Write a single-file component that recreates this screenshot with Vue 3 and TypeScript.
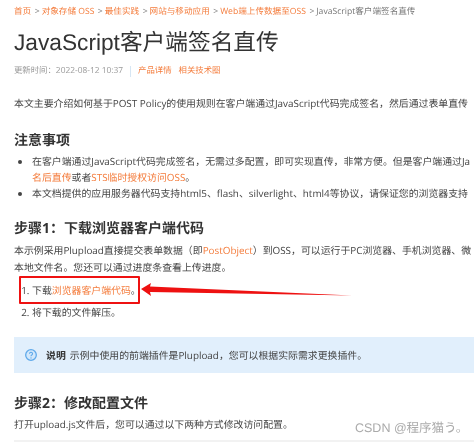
<script setup lang="ts">
const crumbs: string[] = ['首页', '对象存储 OSS', '最佳实践', '网站与移动应用', 'Web端上传数据至OSS']
</script>

<template>
  <main class="page">
    <nav class="crumbs">
      <template v-for="(c, i) in crumbs" :key="c">
        <span v-if="i > 0" class="sep">&gt;</span>
        <a class="link">{{ c }}</a>
      </template>
      <span class="sep">&gt;</span>
      <span class="current">JavaScript客户端签名直传</span>
    </nav>
    <h1 class="title">JavaScript客户端签名直传</h1>
    <div class="meta">
      <span>更新时间：2022-08-12 10:37</span>
      <i class="divider"></i>
      <a class="link">产品详情</a>
      <a class="link">相关技术圈</a>
    </div>
    <p class="intro">本文主要介绍如何基于POST Policy的使用规则在客户端通过JavaScript代码完成签名，然后通过表单直传</p>

    <h2 class="h-first">注意事项</h2>
    <ul class="bullets">
      <li>
        在客户端通过JavaScript代码完成签名，无需过多配置，即可实现直传，非常方便。但是客户端通过Ja<br />
        <a class="link">名后直传</a>或者<a class="link">STS临时授权访问OSS</a>。
      </li>
      <li>本文档提供的应用服务器代码支持html5、flash、silverlight、html4等协议，请保证您的浏览器支持</li>
    </ul>

    <h2 class="h-step">步骤1：下载浏览器客户端代码</h2>
    <p class="para">本示例采用Plupload直接提交表单数据（即<a class="link">PostObject</a>）到OSS，可以运行于PC浏览器、手机浏览器、微<br />本地文件名。您还可以通过进度条查看上传进度。</p>
    <ol class="steps">
      <li>下载<a class="link">浏览器客户端代码</a>。</li>
      <li>将下载的文件解压。</li>
    </ol>

    <aside class="note">
      <svg class="note-icon" viewBox="0 0 14 14" width="12" height="12" aria-hidden="true">
        <circle cx="7" cy="7" r="6.2" fill="#d3e8fb" stroke="#5fa9ea" stroke-width="1.5" />
        <path d="M5.2 5.5a1.8 1.8 0 1 1 2.7 1.6c-.6.35-.9.7-.9 1.4" fill="none" stroke="#5fa9ea" stroke-width="1.3" />
        <circle cx="7" cy="10.4" r=".8" fill="#5fa9ea" />
      </svg>
      <b>说明</b>
      <span>示例中使用的前端插件是Plupload，您可以根据实际需求更换插件。</span>
    </aside>

    <h2 class="h-next">步骤2：修改配置文件</h2>
    <p class="para last">打开upload.js文件后，您可以通过以下两种方式修改访问配置。</p>
    <div class="bottom-strip"></div>

    <div class="mark-box"></div>
    <svg class="mark-arrow" viewBox="0 0 220 20" width="220" height="20" aria-hidden="true">
      <polygon points="0,7 10,1 9,4.5 211,13.5 9,10 10,14" fill="#ee1111" />
    </svg>
    <div class="watermark">CSDN @程序猫う。</div>
  </main>
</template>

<style>
html, body { margin: 0; background: #fff; }
</style>

<style scoped>
.page {
  position: relative;
  width: 474px;
  height: 442px;
  overflow: hidden;
  box-sizing: border-box;
  padding: 6px 0 0 14px;
  background: #fff;
  color: #444;
  font-family: "Open Sans", "Noto Sans CJK SC", sans-serif;
  font-size: 9.9px;
  line-height: 16px;
  white-space: nowrap;
  text-rendering: geometricPrecision;
  filter: blur(0.4px);
}
.link { color: #f47c3c; }
.crumbs { display: flex; align-items: center; height: 11px; line-height: 11px; font-size: 8.6px; color: #777; }
.sep { margin: 0 2px 0 3.5px; color: #888; }
.current { color: #777; }
.title { margin: 7px 0 0; font-family: "Liberation Sans", "Noto Sans CJK SC", sans-serif; font-size: 22.7px; line-height: 36px; font-weight: 400; color: #333; }
.meta { display: flex; align-items: center; gap: 7px; margin-top: 4px; height: 14px; font-size: 8.4px; color: #999; }
.divider { width: 1px; height: 11px; background: #d6e6f4; }
.intro { margin: 17px 0 0; }
h2 { margin: 0; font-size: 14px; line-height: 20px; font-weight: 700; color: #333; }
.h-first { margin-top: 20px; }
.bullets { margin: 2px 0 0; padding: 0 0 0 18px; }
.h-step { margin-top: 18px; }
.para { margin: 3px 0 0; line-height: 17px; }
.steps { margin: 4px 0 0; padding: 0 0 0 18px; }
.steps li { height: 22px; line-height: 20px; }
.note {
  display: flex;
  align-items: center;
  gap: 4px;
  height: 36px;
  margin-top: 13px;
  padding-left: 11px;
  background: #e1effc;
}
.note-icon { margin-right: 5px; }
.note b { color: #333; }
.h-next { margin-top: 21px; }
.last { margin-top: 2px; }
.bottom-strip { position: absolute; left: 14px; right: 0; bottom: 0; height: 2px; background: #f2f2f2; }
.mark-box { position: absolute; left: 19px; top: 276px; width: 117px; height: 24px; border: 2px solid #e11; border-radius: 1px; }
.mark-arrow { position: absolute; left: 141px; top: 282px; }
.watermark { position: absolute; left: 355px; top: 420px; font-size: 12.5px; line-height: 16px; color: #aaa; font-family: "Liberation Sans", "Noto Sans CJK SC", sans-serif; }
</style>
